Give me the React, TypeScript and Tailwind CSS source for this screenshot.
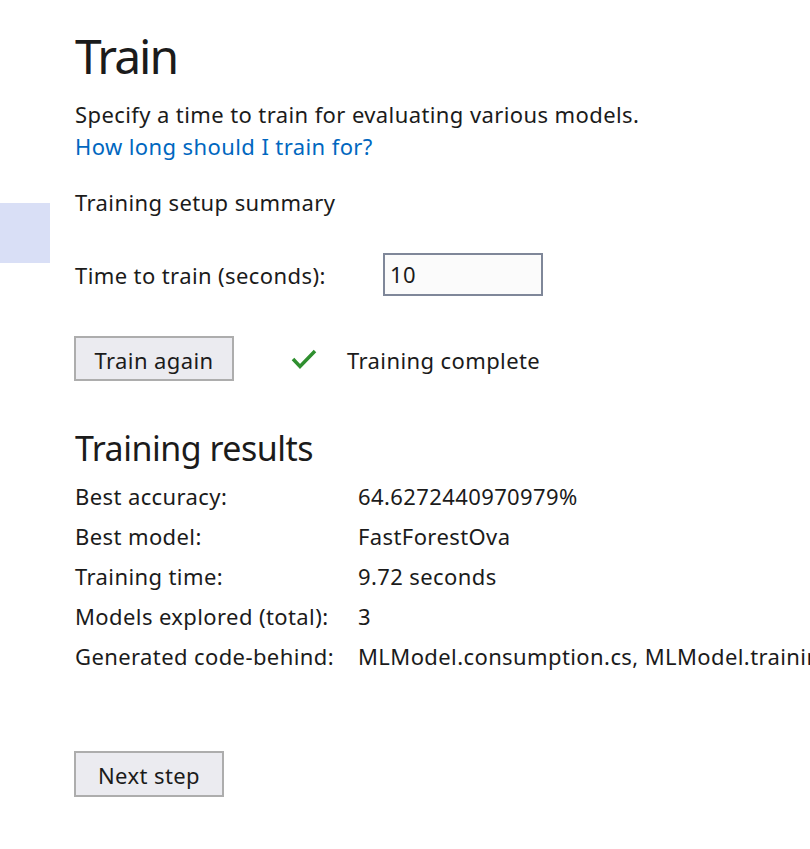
import React from 'react';

const rows: [string, string][] = [
  ['Best accuracy:', '64.6272440970979%'],
  ['Best model:', 'FastForestOva'],
  ['Training time:', '9.72 seconds'],
  ['Models explored (total):', '3'],
  ['Generated code-behind:', 'MLModel.consumption.cs, MLModel.training.cs'],
];

const App: React.FC = () => {
  return (
    <div
      className="flex w-[810px] h-[849px] overflow-hidden bg-white text-[#1b1b1b]"
      style={{ fontFamily: '"Noto Sans", "Open Sans", sans-serif' }}
    >
      {/* sidebar selection marker */}
      <div className="w-[50px] shrink-0">
        <div className="mt-[203px] h-[60px] w-[50px] bg-[#d9dff6]" />
      </div>

      <div className="ml-[25px] flex flex-col min-w-0 flex-1 text-[22px] tracking-[0.4px]">
        <h1 className="mt-[26px] text-[48px] leading-[60px] tracking-[-2px] font-normal">Train</h1>
        <p className="mt-[12px] leading-[32px]">
          Specify a time to train for evaluating various models.
        </p>
        <a href="#" className="leading-[32px] text-[#0067c0]">
          How long should I train for?
        </a>

        <p className="mt-[24px] leading-[32px]">Training setup summary</p>

        <div className="mt-[35px] flex items-center">
          <span className="w-[308px] leading-[32px]">Time to train (seconds):</span>
          <div className="flex items-center w-[160px] h-[43px] border-2 border-[#7f8799] bg-[#fbfbfb] px-[5px]">
            10
          </div>
        </div>

        <div className="mt-[40px] flex items-center">
          <button className="w-[160px] h-[45px] -ml-px pt-[3px] border-2 border-[#adadad] bg-[#ebebf0] leading-[32px] tracking-[0.4px]">
            Train again
          </button>
          <svg className="ml-[56px]" width="28" height="22" viewBox="0 0 28 22" fill="none">
            <polyline points="3,11 10,18.5 25,3" stroke="#2f8f2f" strokeWidth="3.5" />
          </svg>
          <span className="ml-[29px] pt-[3px] leading-[32px]">Training complete</span>
        </div>

        <h2 className="mt-[45px] text-[34px] leading-[44px] tracking-[-0.5px] font-normal">Training results</h2>

        <div className="mt-[6px] flex flex-col">
          {rows.map(([label, value]) => (
            <div key={label} className="flex h-[40px] items-center leading-[40px] whitespace-nowrap">
              <span className="w-[283px] shrink-0">{label}</span>
              <span>{value}</span>
            </div>
          ))}
        </div>

        <button className="mt-[75px] w-[150px] h-[46px] -ml-px pt-[2px] border-2 border-[#adadad] bg-[#ebebf0] leading-[32px] tracking-[0.4px]">
          Next step
        </button>
      </div>
    </div>
  );
};

export default App;
